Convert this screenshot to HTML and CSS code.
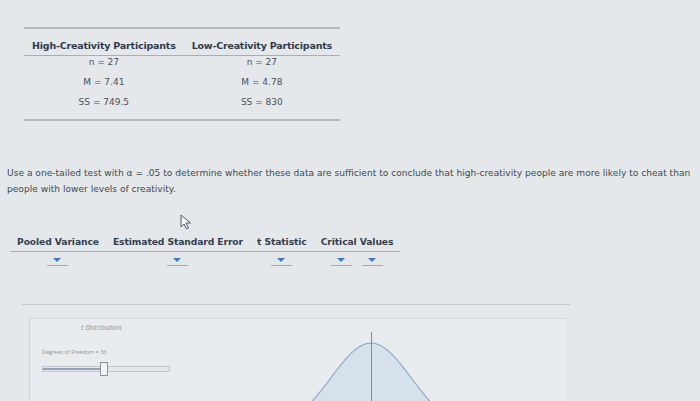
FILE: index.html
```html
<!DOCTYPE html>
<html>
<head>
<meta charset="utf-8">
<link rel="stylesheet" href="styles.css">
</head>
<body>
<div class="page">
  <table class="data">
    <thead>
      <tr><th>High-Creativity Participants</th><th>Low-Creativity Participants</th></tr>
    </thead>
    <tbody>
      <tr><td>n = 27</td><td>n = 27</td></tr>
      <tr><td>M = 7.41</td><td>M = 4.78</td></tr>
      <tr><td>SS = 749.5</td><td>SS = 830</td></tr>
    </tbody>
  </table>

  <p class="question">Use a one-tailed test with α = .05 to determine whether these data are sufficient to conclude that high-creativity people are more likely to cheat than people with lower levels of creativity.</p>

  <div class="cursor-row">
    <svg class="cursor" width="12" height="16" viewBox="0 0 12 16"><path d="M1 1 L1 13 L4 10 L6.5 15 L8.5 14 L6 9 L10.5 9 Z" fill="#f4f5f6" stroke="#555a60" stroke-width="1"/></svg>
  </div>

  <table class="answers">
    <thead>
      <tr><th>Pooled Variance</th><th>Estimated Standard Error</th><th>t Statistic</th><th>Critical Values</th></tr>
    </thead>
    <tbody>
      <tr>
        <td><div class="ddrow"><span class="dd"><span class="tri"></span></span></div></td>
        <td><div class="ddrow"><span class="dd"><span class="tri"></span></span></div></td>
        <td><div class="ddrow"><span class="dd"><span class="tri"></span></span></div></td>
        <td><div class="ddrow pair"><span class="dd"><span class="tri"></span></span><span class="dd"><span class="tri"></span></span></div></td>
      </tr>
    </tbody>
  </table>

  <div class="sep"></div>

  <div class="panel">
    <div class="controls">
      <div class="title">t Distribution</div>
      <div class="dof">Degrees of Freedom = 36</div>
      <div class="slider"><div class="fill"></div><div class="thumb"></div></div>
    </div>
    <svg class="curve" width="140" height="70" viewBox="0 0 140 70">
      <path d="M5 75.5 L10 70.43 L15 64.8 L20 58.7 L25 52.26 L30 45.63 L35 38.99 L40 32.58 L45 26.61 L50 21.34 L55 16.97 L60 13.71 L65 11.69 L70 11 L75 11.69 L80 13.71 L85 16.97 L90 21.34 L95 26.61 L100 32.58 L105 38.99 L110 45.63 L115 52.26 L120 58.7 L125 64.8 L130 70.43 L135 75.5 Z" fill="#d6e1ec" stroke="#8eaccb" stroke-width="1.2" stroke-linejoin="round"/>
      <line x1="70.5" y1="0" x2="70.5" y2="70" stroke="#7f8a96" stroke-width="1"/>
    </svg>
  </div>
</div>
</body>
</html>
```
FILE: styles.css
```css
html, body {
  margin: 0;
  padding: 0;
  background: #e5e8eb;
  overflow: hidden;
}
body {
  width: 700px;
  height: 401px;
  font-family: "DejaVu Sans", Verdana, sans-serif;
  color: #3d434b;
}
.page {
  padding-top: 27px;
}
.data {
  margin-left: 24px;
  width: 316px;
  border-collapse: collapse;
  border-top: 2px solid #b3b7bc;
  border-bottom: 2px solid #b3b7bc;
  font-size: 9px;
}
.data th {
  font-weight: bold;
  color: #2f3a4a;
  padding: 11px 4px 4px;
  border-bottom: 1.5px solid #a9aeb4;
  font-size: 9.5px;
  letter-spacing: -0.2px;
  white-space: nowrap;
}
.data td {
  text-align: center;
  vertical-align: top;
  color: #4a5058;
  height: 20px;
  line-height: 12px;
  padding: 0;
}
.data tbody tr:last-child td { height: 23px; }

.question {
  margin: 44px 0 0 7px;
  width: 692px;
  font-size: 9.1px;
  line-height: 16px;
  color: #42484f;
}
.cursor-row {
  padding-left: 180px;
  padding-top: 17px;
}
.cursor { display: block; }
.answers {
  margin-left: 10px;
  border-collapse: collapse;
  font-size: 9.2px;
}
.answers th {
  font-weight: bold;
  color: #34404f;
  padding: 6px 7px 4px;
  border-bottom: 1.5px solid #a9aeb4;
  white-space: nowrap;
  letter-spacing: -0.1px;
}
.answers td {
  padding: 5px 0 0;
}
.ddrow {
  display: flex;
  justify-content: center;
  gap: 10px;
}
.dd {
  display: block;
  width: 21px;
  height: 8px;
  border-bottom: 1px solid #a4a9af;
  position: relative;
}
.tri {
  position: absolute;
  left: 6px;
  top: 1px;
  width: 0;
  height: 0;
  border-left: 4.5px solid transparent;
  border-right: 4.5px solid transparent;
  border-top: 4px solid #3c7ac0;
}
.sep {
  margin: 38px 0 0 22px;
  width: 548px;
  height: 1px;
  background: #c5c9cd;
}
.panel {
  margin: 13px 0 0 29px;
  width: 536px;
  height: 90px;
  border-left: 1px solid #d2d5d8;
  border-top: 1px solid #d2d5d8;
  background: #e9ecee;
  display: flex;
  align-items: flex-start;
}
.controls {
  width: 160px;
  padding-left: 12px;
}
.title {
  font-family: "Open Sans", sans-serif;
  font-style: italic;
  font-size: 7px;
  color: #8a9098;
  margin: 4px 0 0 39px;
}
.dof {
  font-family: "Open Sans", sans-serif;
  font-size: 5.5px;
  color: #8c9299;
  margin-top: 16px;
}
.slider {
  position: relative;
  margin-top: 10px;
  width: 126px;
  height: 4px;
  border: 1px solid #c3c8ce;
  background: #e3e6ea;
}
.fill {
  width: 60px;
  height: 2px;
  margin-top: 1px;
  background: #97a3b3;
}
.thumb {
  position: absolute;
  left: 57px;
  top: -5px;
  width: 6px;
  height: 12px;
  border: 1px solid #8a94a0;
  background: #f2f3f5;
}
.curve {
  margin-left: 99px;
  margin-top: 13px;
}
```
